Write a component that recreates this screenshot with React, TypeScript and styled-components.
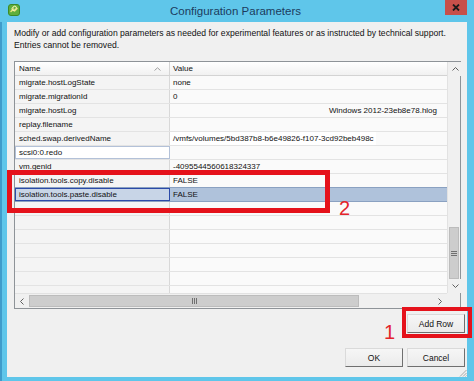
import styled, { createGlobalStyle } from 'styled-components';

const GlobalStyle = createGlobalStyle`
  html, body {
    margin: 0;
    padding: 0;
    background: #5fc6ea;
  }
  * { box-sizing: border-box; }
`;

interface RowData {
  name: string;
  value: string;
  kind?: 'right' | 'overflow' | 'edit' | 'selected';
}

const rows: RowData[] = [
  { name: 'migrate.hostLogState', value: 'none' },
  { name: 'migrate.migrationId', value: '0' },
  { name: 'migrate.hostLog', value: 'Windows 2012-23eb8e78.hlog', kind: 'right' },
  { name: 'replay.filename', value: '' },
  { name: 'sched.swap.derivedName', value: '/vmfs/volumes/5bd387b8-b6e49826-f107-3cd92beb498c', kind: 'overflow' },
  { name: 'scsi0:0.redo', value: '', kind: 'edit' },
  { name: 'vm.genid', value: '-4095544560618324337' },
  { name: 'isolation.tools.copy.disable', value: 'FALSE' },
  { name: 'isolation.tools.paste.disable', value: 'FALSE', kind: 'selected' },
  { name: '', value: '' },
  { name: '', value: '' },
  { name: '', value: '' },
  { name: '', value: '' },
  { name: '', value: '' },
  { name: '', value: '' },
  { name: '', value: '' },
];

const App = () => {
  return (
    <Window>
      <GlobalStyle />
      <TitleBar>
        <AppIcon viewBox="0 0 12 12">
          <rect x="0.5" y="0.5" width="11" height="11" rx="2.5" fill="#5fae3c" stroke="#3d8a26" />
          <path d="M3 7.5 L5.5 5 M6.5 7 L9 4.5" stroke="#e8e07a" strokeWidth="1.6" strokeLinecap="round" />
          <rect x="4" y="3" width="4.5" height="3" rx="1" fill="none" stroke="#f4f1b0" strokeWidth="1" transform="rotate(-45 6 4.5)" />
        </AppIcon>
        <Title>Configuration Parameters</Title>
        <CloseButton>
          <svg width="8" height="7" viewBox="0 0 8 7">
            <path d="M1 0.5 L7 6.5 M7 0.5 L1 6.5" stroke="#1a1a1a" strokeWidth="1.8" />
          </svg>
        </CloseButton>
      </TitleBar>

      <Panel>
        <Description>
          Modify or add configuration parameters as needed for experimental features or as instructed by technical support.
          <br />
          Entries cannot be removed.
        </Description>

        <GridFrame>
          <ListArea>
            <HeaderRow>
              <HeaderCell $first>
                Name
                <SortMark viewBox="0 0 7 4">
                  <path d="M0.5 3.5 L3.5 0.8 L6.5 3.5" fill="none" stroke="#a0a0a0" strokeWidth="1" />
                </SortMark>
              </HeaderCell>
              <HeaderCell>Value</HeaderCell>
            </HeaderRow>
            {rows.map((r, i) => (
              <Row key={i} $selected={r.kind === 'selected'}>
                <NameCell $kind={r.kind}>{r.name}</NameCell>
                <ValueCell $kind={r.kind}>
                  {r.kind === 'overflow' ? <OverflowText>{r.value}</OverflowText> : r.value}
                </ValueCell>
              </Row>
            ))}
          </ListArea>

          <VScroll>
            <ScrollArrow>
              <svg width="7" height="4" viewBox="0 0 7 4">
                <path d="M0.5 3.5 L3.5 0.5 L6.5 3.5" fill="none" stroke="#606060" />
              </svg>
            </ScrollArrow>
            <VTrack>
              <VThumb>
                <svg width="6" height="5" viewBox="0 0 6 5">
                  <path d="M0 0.5 H6 M0 2.5 H6 M0 4.5 H6" stroke="#707070" />
                </svg>
              </VThumb>
            </VTrack>
            <ScrollArrow>
              <svg width="7" height="4" viewBox="0 0 7 4">
                <path d="M0.5 0.5 L3.5 3.5 L6.5 0.5" fill="none" stroke="#606060" />
              </svg>
            </ScrollArrow>
          </VScroll>

          <HScroll>
            <ScrollArrow>
              <svg width="4" height="7" viewBox="0 0 4 7">
                <path d="M3.5 0.5 L0.5 3.5 L3.5 6.5" fill="none" stroke="#606060" />
              </svg>
            </ScrollArrow>
            <HThumb>
              <svg width="5" height="6" viewBox="0 0 5 6">
                <path d="M0.5 0 V6 M2.5 0 V6 M4.5 0 V6" stroke="#707070" />
              </svg>
            </HThumb>
            <HTrack />
            <ScrollArrow>
              <svg width="4" height="7" viewBox="0 0 4 7">
                <path d="M0.5 0.5 L3.5 3.5 L0.5 6.5" fill="none" stroke="#606060" />
              </svg>
            </ScrollArrow>
          </HScroll>
          <Corner />
        </GridFrame>

        <ButtonBar>
          <Button>Add Row</Button>
        </ButtonBar>
        <ButtonBar $gap>
          <Button>OK</Button>
          <Button>Cancel</Button>
        </ButtonBar>

        <Grip viewBox="0 0 8 8">
          <path d="M7.5 1 L1 7.5 M7.5 4 L4 7.5 M7.5 6.5 L6.5 7.5" stroke="#a8a8a8" strokeWidth="1" />
        </Grip>
      </Panel>

      <Marker style={{ left: 7, top: 170, width: 323, height: 43 }} $thick={5} />
      <MarkLabel style={{ left: 339, top: 196 }}>2</MarkLabel>
      <Marker style={{ left: 402, top: 307, width: 70, height: 31 }} $thick={4} />
      <MarkLabel style={{ left: 384, top: 320 }}>1</MarkLabel>
    </Window>
  );
};

export default App;

const Window = styled.div`
  position: relative;
  width: 474px;
  height: 381px;
  display: flex;
  flex-direction: column;
  background: linear-gradient(to right, #3f9ccb 0 2px, #5fc6ea 2px);
  font-family: 'Liberation Sans', Arial, sans-serif;
  overflow: hidden;
`;

const TitleBar = styled.div`
  height: 22px;
  display: flex;
  align-items: flex-start;
  background: #5fc6ea;
`;

const AppIcon = styled.svg`
  width: 12px;
  height: 12px;
  margin: 4px 0 0 8px;
`;

const Title = styled.div`
  flex: 1;
  text-align: center;
  font-size: 11.5px;
  line-height: 22px;
  color: #1c3c5e;
  padding-left: 6px;
`;

const CloseButton = styled.div`
  width: 22px;
  height: 15px;
  margin-right: 7px;
  background: #c7504a;
  display: flex;
  align-items: center;
  justify-content: center;
`;

const Panel = styled.div`
  position: relative;
  flex: 1;
  margin: 0 7px 4px 7px;
  background: #f0f0f0;
  padding: 5px 2px 0 7px;
  display: flex;
  flex-direction: column;
`;

const Description = styled.div`
  font-size: 8.6px;
  line-height: 12px;
  color: #111;
  height: 24px;
`;

const GridFrame = styled.div`
  margin-top: 10px;
  width: 447px;
  height: 248px;
  border: 1px solid #8e9398;
  display: grid;
  grid-template-columns: 1fr 13px;
  grid-template-rows: 1fr 15px;
  background: #fff;
`;

const ListArea = styled.div`
  overflow: hidden;
  font-size: 8px;
  color: #111;
`;

const HeaderRow = styled.div`
  display: grid;
  grid-template-columns: 155px 1fr;
  height: 14px;
  border-bottom: 1px solid #d3d3d3;
  background: linear-gradient(#ffffff, #f1f1f1);
`;

const HeaderCell = styled.div<{ $first?: boolean }>`
  display: flex;
  align-items: center;
  justify-content: space-between;
  padding: 0 ${(p) => (p.$first ? '8px' : '0')} 0 ${(p) => (p.$first ? '4px' : '3px')};
  border-right: ${(p) => (p.$first ? '1px solid #d5d5d5' : 'none')};
  line-height: 13px;
`;

const SortMark = styled.svg`
  width: 7px;
  height: 4px;
`;

const Row = styled.div<{ $selected?: boolean }>`
  display: grid;
  grid-template-columns: 155px 1fr;
  border-bottom: 1px solid ${(p) => (p.$selected ? '#8aa1c1' : '#e3e3e3')};
  border-top: ${(p) => (p.$selected ? '1px solid #8aa1c1' : 'none')};
  margin-top: ${(p) => (p.$selected ? '-1px' : '0')};
  height: ${(p) => (p.$selected ? '15px' : '14px')};
`;

const NameCell = styled.div<{ $kind?: string }>`
  padding-left: 4px;
  line-height: 13px;
  white-space: nowrap;
  overflow: hidden;
  border-right: 1px solid #d8d8d8;
  background: #f4f4f4;
  ${(p) =>
    p.$kind === 'edit' &&
    `
    background: #ffffff;
    border: 1px solid #b3c1d8;
    padding-left: 3px;
    line-height: 11px;
  `}
  ${(p) =>
    p.$kind === 'selected' &&
    `
    background: #c8d5e7;
    border: 1px solid #2c4aa8;
    padding-left: 3px;
    line-height: 11px;
  `}
`;

const ValueCell = styled.div<{ $kind?: string }>`
  padding: 0 10px 0 3px;
  line-height: 13px;
  white-space: nowrap;
  overflow: hidden;
  background: ${(p) => (p.$kind === 'selected' ? '#afc2db' : '#fafafa')};
  text-align: ${(p) => (p.$kind === 'right' ? 'right' : 'left')};
  ${(p) => p.$kind === 'overflow' && 'padding-left: 0;'}
`;

const OverflowText = styled.span`
  display: inline-block;
  background: #ffffff;
  padding: 0 2px 0 3px;
  height: 13px;
`;

const VScroll = styled.div`
  display: flex;
  flex-direction: column;
  background: #f0f0f0;
  border-left: 1px solid #e2e2e2;
`;

const ScrollArrow = styled.div`
  width: 14px;
  height: 14px;
  flex: none;
  display: flex;
  align-items: center;
  justify-content: center;
  background: #f0f0f0;
`;

const VTrack = styled.div`
  flex: 1;
  display: flex;
  flex-direction: column;
  justify-content: flex-end;
`;

const VThumb = styled.div`
  height: 52px;
  margin: 0 1px;
  background: #cdcdcd;
  border: 1px solid #bcbcbc;
  display: flex;
  align-items: center;
  justify-content: center;
`;

const HScroll = styled.div`
  display: flex;
  align-items: stretch;
  background: #f0f0f0;
  border-top: 1px solid #e2e2e2;
`;

const HThumb = styled.div`
  width: 330px;
  margin: 1px 0;
  background: #cdcdcd;
  border: 1px solid #bcbcbc;
  display: flex;
  align-items: center;
  justify-content: center;
`;

const HTrack = styled.div`
  flex: 1;
`;

const Corner = styled.div`
  background: #f0f0f0;
`;

const ButtonBar = styled.div<{ $gap?: boolean }>`
  display: flex;
  justify-content: flex-end;
  gap: 4px;
  margin-top: ${(p) => (p.$gap ? '15px' : '5px')};
`;

const Button = styled.div`
  width: 58px;
  height: 19px;
  display: flex;
  align-items: center;
  justify-content: center;
  font-size: 8.5px;
  color: #111;
  background: linear-gradient(#f6f6f6, #ebebeb);
  border: 1px solid;
  border-color: #dadada #6f6f6f #6f6f6f #dadada;
`;

const Grip = styled.svg`
  position: absolute;
  right: 0;
  bottom: 0;
  width: 8px;
  height: 8px;
`;

const Marker = styled.div<{ $thick: number }>`
  position: absolute;
  border: ${(p) => p.$thick}px solid #e5121b;
`;

const MarkLabel = styled.div`
  position: absolute;
  font-size: 20px;
  line-height: 24px;
  color: #e3242b;
  font-family: 'Liberation Sans', Arial, sans-serif;
`;
